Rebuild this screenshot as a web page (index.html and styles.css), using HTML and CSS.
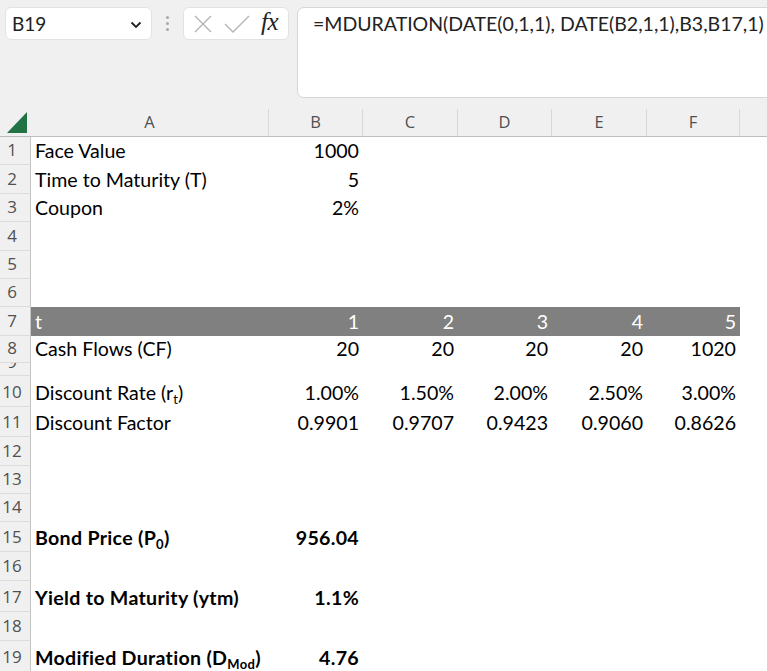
FILE: index.html
```html
<!DOCTYPE html>
<html lang="en">
<head>
    <meta charset="UTF-8">
    <meta name="viewport" content="width=device-width, initial-scale=1.0">
    <title>Bond Duration</title>
    <link rel="stylesheet" href="styles.css">
</head>
<body>
    <div class="toolbar">
        <div class="namebox">
            <span>B19</span>
            <svg class="chevron" width="12" height="8" viewBox="0 0 12 8"><path d="M1.5 1.5 L6 6 L10.5 1.5" fill="none" stroke="#222" stroke-width="1.8"/></svg>
        </div>
        <div class="grip"><i></i><i></i><i></i></div>
        <div class="fxbox">
            <svg width="20" height="20" viewBox="0 0 20 20"><path d="M2 2 L18 18 M18 2 L2 18" stroke="#b5b5b5" stroke-width="1.4"/></svg>
            <svg width="26" height="20" viewBox="0 0 26 20"><path d="M1 10 L9 18 L25 2" fill="none" stroke="#b5b5b5" stroke-width="1.4"/></svg>
            <span class="fx">fx</span>
        </div>
        <div class="formula">=MDURATION(DATE(0,1,1), DATE(B2,1,1),B3,B17,1)</div>
    </div>

    <div class="sheet">
        <div class="row head">
            <div class="corner"><div class="tri"></div></div>
            <div class="col">A</div>
            <div class="col">B</div>
            <div class="col">C</div>
            <div class="col">D</div>
            <div class="col">E</div>
            <div class="col">F</div>
            <div class="col last"></div>
        </div>

        <div class="row">
            <div class="rh">1</div>
            <div class="cell"><span>Face Value</span></div>
            <div class="cell num"><span>1000</span></div>
        </div>
        <div class="row">
            <div class="rh">2</div>
            <div class="cell"><span>Time to Maturity (T)</span></div>
            <div class="cell num"><span>5</span></div>
        </div>
        <div class="row">
            <div class="rh">3</div>
            <div class="cell"><span>Coupon</span></div>
            <div class="cell num"><span>2%</span></div>
        </div>
        <div class="row"><div class="rh">4</div></div>
        <div class="row"><div class="rh">5</div></div>
        <div class="row"><div class="rh">6</div></div>
        <div class="row band">
            <div class="rh">7</div>
            <div class="cell"><span>t</span></div>
            <div class="cell num"><span>1</span></div>
            <div class="cell num"><span>2</span></div>
            <div class="cell num"><span>3</span></div>
            <div class="cell num"><span>4</span></div>
            <div class="cell num"><span>5</span></div>
            <div class="cell blank"></div>
        </div>
        <div class="row r8">
            <div class="rh">8</div>
            <div class="cell"><span>Cash Flows (CF)</span></div>
            <div class="cell num"><span>20</span></div>
            <div class="cell num"><span>20</span></div>
            <div class="cell num"><span>20</span></div>
            <div class="cell num"><span>20</span></div>
            <div class="cell num"><span>1020</span></div>
        </div>
        <div class="row r9"><div class="rh"><span>9</span></div></div>
        <div class="row r10">
            <div class="rh">10</div>
            <div class="cell"><span>Discount Rate (r<sub>t</sub>)</span></div>
            <div class="cell num"><span>1.00%</span></div>
            <div class="cell num"><span>1.50%</span></div>
            <div class="cell num"><span>2.00%</span></div>
            <div class="cell num"><span>2.50%</span></div>
            <div class="cell num"><span>3.00%</span></div>
        </div>
        <div class="row r11">
            <div class="rh">11</div>
            <div class="cell"><span>Discount Factor</span></div>
            <div class="cell num"><span>0.9901</span></div>
            <div class="cell num"><span>0.9707</span></div>
            <div class="cell num"><span>0.9423</span></div>
            <div class="cell num"><span>0.9060</span></div>
            <div class="cell num"><span>0.8626</span></div>
        </div>
        <div class="row"><div class="rh">12</div></div>
        <div class="row"><div class="rh">13</div></div>
        <div class="row"><div class="rh">14</div></div>
        <div class="row tall bold">
            <div class="rh">15</div>
            <div class="cell"><span>Bond Price (P<sub>0</sub>)</span></div>
            <div class="cell num"><span>956.04</span></div>
        </div>
        <div class="row"><div class="rh">16</div></div>
        <div class="row taller bold">
            <div class="rh">17</div>
            <div class="cell"><span>Yield to Maturity (ytm)</span></div>
            <div class="cell num"><span>1.1%</span></div>
        </div>
        <div class="row r18"><div class="rh">18</div></div>
        <div class="row taller bold">
            <div class="rh">19</div>
            <div class="cell"><span>Modified Duration (D<sub>Mod</sub>)</span></div>
            <div class="cell num"><span>4.76</span></div>
        </div>
    </div>
</body>
</html>
```

FILE: styles.css
```css
body {
    margin: 0;
    background-color: #f0f0f0;
    font-family: 'Lato', 'Open Sans', sans-serif;
    color: #000;
    overflow: hidden;
}

/* formula bar */

.toolbar {
    display: flex;
    align-items: flex-start;
    padding-top: 7px;
    padding-left: 5px;
    height: 101px;
    box-sizing: border-box;
}

.namebox {
    width: 147px;
    height: 33px;
    box-sizing: border-box;
    background-color: #fff;
    border: 1px solid #e2e2e2;
    border-radius: 6px;
    display: flex;
    align-items: center;
    justify-content: space-between;
    padding: 0 9px 0 6px;
    font-size: 19px;
    color: #222;
}

.chevron {
    margin-top: 2px;
}

.grip {
    width: 31px;
    height: 33px;
    display: flex;
    flex-direction: column;
    align-items: center;
    justify-content: center;
    gap: 3px;
}

.grip i {
    width: 3px;
    height: 3px;
    border-radius: 50%;
    background-color: #a8a8a8;
}

.fxbox {
    width: 106px;
    height: 33px;
    box-sizing: border-box;
    background-color: #fff;
    border: 1px solid #e2e2e2;
    border-radius: 6px;
    display: flex;
    align-items: center;
    padding: 0 6px 0 9px;
    gap: 11px;
}

.fx {
    font-family: 'Liberation Serif', serif;
    font-style: italic;
    font-size: 25px;
    color: #222;
    margin-top: -4px;
    letter-spacing: -0.5px;
}

.formula {
    flex: 1;
    height: 91px;
    margin-left: 8px;
    margin-right: -20px;
    box-sizing: border-box;
    background-color: #fff;
    border: 1px solid #d6d6d6;
    border-radius: 7px;
    padding: 4px 0 0 15px;
    font-size: 19.5px;
    color: #222;
    white-space: nowrap;
}

/* grid */

.sheet {
    background-color: #fff;
}

.row {
    display: grid;
    grid-template-columns: 31px 238px 94px 95px 94px 95px 93px 27px;
    height: 28.4px;
}

.head {
    height: 35px;
    background-color: #f0f0f0;
    border-bottom: 1px solid #bdbdbd;
}

.corner {
    position: relative;
}

.tri {
    position: absolute;
    left: 7px;
    bottom: 3px;
    width: 0;
    height: 0;
    border-left: 20px solid transparent;
    border-bottom: 21px solid #217346;
}

.col {
    display: flex;
    align-items: flex-end;
    justify-content: center;
    padding-bottom: 3px;
    margin-top: 8px;
    border-right: 1px solid #d8d8d8;
    font-family: 'Open Sans', sans-serif;
    font-size: 16.5px;
    color: #505050;
}

.col.last {
    border-right: none;
}

.rh {
    background-color: #f0f0f0;
    border-right: 1px solid #c4c4c4;
    border-bottom: 1px solid #dcdcdc;
    box-sizing: border-box;
    display: flex;
    align-items: flex-end;
    justify-content: center;
    padding-right: 6px;
    padding-bottom: 3px;
    font-family: 'Open Sans', sans-serif;
    font-size: 17px;
    color: #505050;
    overflow: hidden;
}

.cell {
    display: flex;
    align-items: flex-end;
    padding: 0 4px 2px 4px;
    font-size: 19.6px;
    white-space: nowrap;
    line-height: 24px;
}

.cell.num {
    justify-content: flex-end;
}

.cell sub {
    font-size: 13px;
    line-height: 0;
    vertical-align: -4px;
}

.band .cell {
    background-color: #808080;
    color: #fff;
}

.band .cell.blank {
    background-color: #fff;
}

.r8 { height: 27px; }
.r9 { height: 13.5px; }
.r9 .rh { align-items: flex-start; }
.r9 .rh span { margin-top: -13px; }
.r10 { height: 31px; }
.r11 { height: 30px; }
.tall { height: 30px; }
.taller { height: 31px; }
.r18 { height: 29px; }

.bold .cell {
    font-weight: bold;
    letter-spacing: 0.3px;
}
```
